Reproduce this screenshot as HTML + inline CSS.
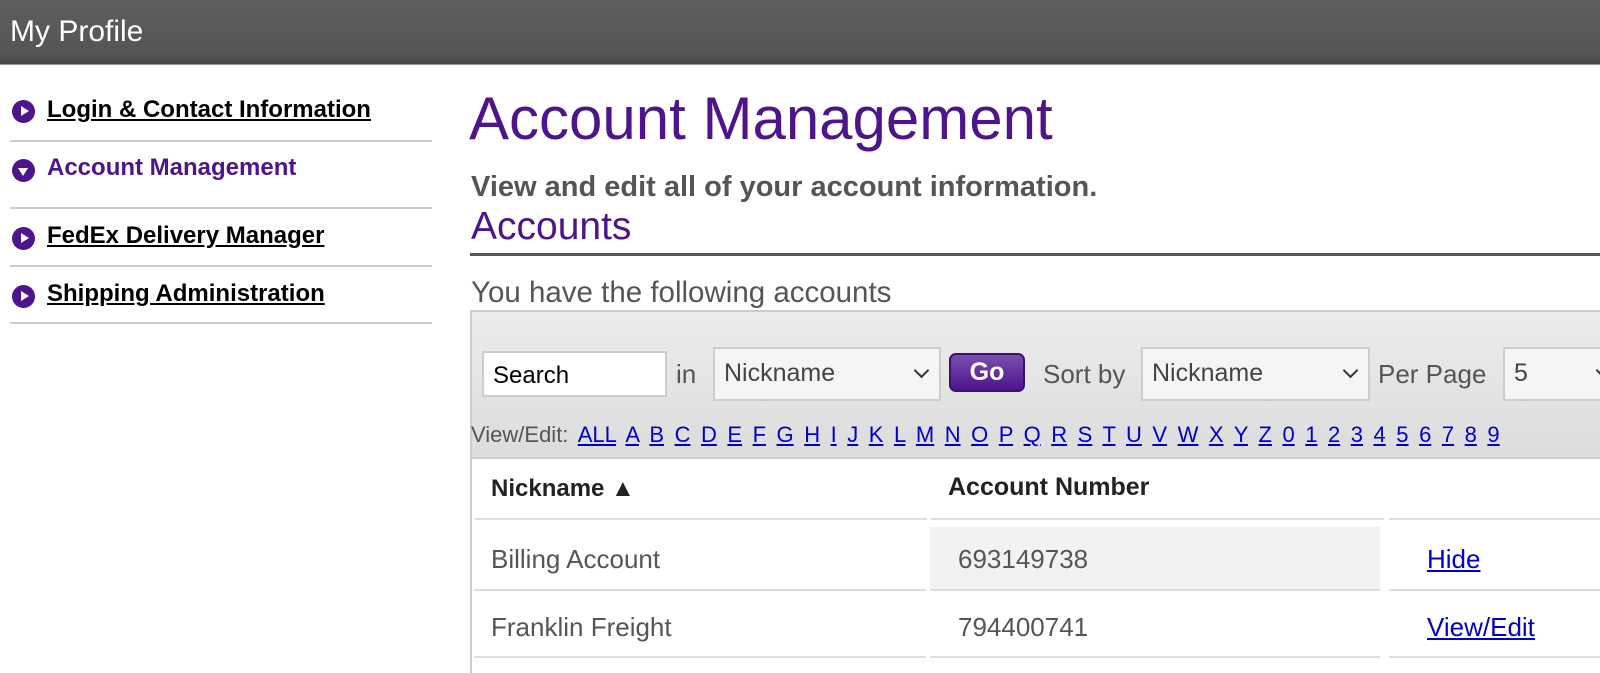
<!DOCTYPE html>
<html><head><meta charset="utf-8"><style>
*{margin:0;padding:0;box-sizing:border-box}
body{width:1600px;height:673px;overflow:hidden;background:#fff;font-family:"Liberation Sans",Arial,sans-serif;position:relative}
.a{position:absolute;white-space:nowrap}
.hdr{left:0;top:0;width:1600px;height:65px;background:linear-gradient(#5e5e5e,#555 85%,#444);border-bottom:1px solid #999}
.nav{left:47px;font-size:24px;font-weight:bold;color:#000;text-decoration:underline}
.ic{left:12px;width:23px;height:23px;border-radius:50%;background:#4d148c}
.ic:after{content:"";position:absolute;left:9px;top:6px;border-left:8px solid #fff;border-top:5.5px solid transparent;border-bottom:5.5px solid transparent}
.ic.d:after{left:6px;top:9px;border-top:8px solid #fff;border-left:5.5px solid transparent;border-right:5.5px solid transparent;border-bottom:0}
.hr{left:10px;width:422px;height:2px;background:#ccc}
.sel{background:#f5f5f5;border:2px solid #ccc;font-size:25px;color:#444;padding-left:9px;line-height:49px}
.sel:after{content:"";position:absolute;right:12px;top:16px;width:9px;height:9px;border-right:2.5px solid #333;border-bottom:2.5px solid #333;transform:rotate(45deg)}
.lk{color:#00c;text-decoration:underline}
.g{font-size:26px;color:#555}
.ln{height:2px;background:#ddd}
</style></head><body>
<div class="a hdr"></div>
<div class="a" style="left:10px;top:15px;font-size:30px;color:#fff">My Profile</div>

<div class="a ic" style="top:100px"></div><div class="a nav" style="top:96px">Login &amp; Contact Information</div>
<div class="a hr" style="top:140px"></div>
<div class="a ic d" style="top:159px"></div><div class="a nav" style="top:154px;color:#4d148c;text-decoration:none">Account Management</div>
<div class="a hr" style="top:207px"></div>
<div class="a ic" style="top:227px"></div><div class="a nav" style="top:222px">FedEx Delivery Manager</div>
<div class="a hr" style="top:265px"></div>
<div class="a ic" style="top:285px"></div><div class="a nav" style="top:280px">Shipping Administration</div>
<div class="a hr" style="top:322px"></div>

<div class="a" style="left:469px;top:84px;font-size:60px;color:#4d148c">Account Management</div>
<div class="a" style="left:471px;top:171px;font-size:29px;font-weight:bold;color:#555">View and edit all of your account information.</div>
<div class="a" style="left:471px;top:205px;font-size:39px;color:#4d148c">Accounts</div>
<div class="a" style="left:470px;top:253px;width:1130px;height:3px;background:#555"></div>
<div class="a" style="left:471px;top:276px;font-size:29.5px;color:#555">You have the following accounts</div>

<div class="a" style="left:470px;top:310px;width:1140px;height:149px;background:linear-gradient(#ececec,#dcdcdc);border:2px solid #ccc"></div>
<div class="a" style="left:470px;top:458px;width:2px;height:215px;background:#ccc"></div>
<div class="a" style="left:482px;top:351px;width:185px;height:46px;background:#fff;border:2px solid #ccc;font-size:24px;color:#000;padding:9px 0 0 9px">Search</div>
<div class="a g" style="left:676px;top:359px">in</div>
<div class="a sel" style="left:713px;top:347px;width:228px;height:54px">Nickname</div>
<div class="a" style="left:949px;top:353px;width:76px;height:39px;border-radius:7px;background:linear-gradient(#7a4fb0,#4d148c);border:2px solid #3a1070;color:#fff;font-weight:bold;font-size:25px;text-align:center;line-height:34px">Go</div>
<div class="a g" style="left:1043px;top:359px">Sort by</div>
<div class="a sel" style="left:1141px;top:347px;width:229px;height:54px">Nickname</div>
<div class="a g" style="left:1378px;top:359px">Per Page</div>
<div class="a sel" style="left:1503px;top:347px;width:120px;height:54px">5</div>
<div class="a" style="left:471px;top:422px;font-size:22px;color:#555;word-spacing:4.4px">View/Edit: <span class="lk">ALL</span> <span class="lk">A</span> <span class="lk">B</span> <span class="lk">C</span> <span class="lk">D</span> <span class="lk">E</span> <span class="lk">F</span> <span class="lk">G</span> <span class="lk">H</span> <span class="lk">I</span> <span class="lk">J</span> <span class="lk">K</span> <span class="lk">L</span> <span class="lk">M</span> <span class="lk">N</span> <span class="lk">O</span> <span class="lk">P</span> <span class="lk">Q</span> <span class="lk">R</span> <span class="lk">S</span> <span class="lk">T</span> <span class="lk">U</span> <span class="lk">V</span> <span class="lk">W</span> <span class="lk">X</span> <span class="lk">Y</span> <span class="lk">Z</span> <span class="lk">0</span> <span class="lk">1</span> <span class="lk">2</span> <span class="lk">3</span> <span class="lk">4</span> <span class="lk">5</span> <span class="lk">6</span> <span class="lk">7</span> <span class="lk">8</span> <span class="lk">9</span></div>

<div class="a" style="left:491px;top:475px;font-size:24px;font-weight:bold;color:#222">Nickname ▲</div>
<div class="a" style="left:948px;top:473px;font-size:25px;font-weight:bold;color:#222">Account Number</div>
<div class="a ln" style="left:475px;top:518px;width:452px"></div>
<div class="a ln" style="left:931px;top:518px;width:453px"></div>
<div class="a ln" style="left:1389px;top:518px;width:211px"></div>
<div class="a" style="left:930px;top:527px;width:450px;height:62px;background:#f2f2f2"></div>
<div class="a g" style="left:491px;top:544px">Billing Account</div>
<div class="a g" style="left:958px;top:544px">693149738</div>
<div class="a lk" style="left:1427px;top:544px;font-size:26px">Hide</div>
<div class="a ln" style="left:474px;top:589px;width:452px"></div>
<div class="a ln" style="left:930px;top:589px;width:450px"></div>
<div class="a ln" style="left:1389px;top:589px;width:211px"></div>
<div class="a g" style="left:491px;top:612px">Franklin Freight</div>
<div class="a g" style="left:958px;top:612px">794400741</div>
<div class="a lk" style="left:1427px;top:612px;font-size:26px">View/Edit</div>
<div class="a ln" style="left:474px;top:656px;width:452px"></div>
<div class="a ln" style="left:930px;top:656px;width:450px"></div>
<div class="a ln" style="left:1389px;top:656px;width:211px"></div>
</body></html>
